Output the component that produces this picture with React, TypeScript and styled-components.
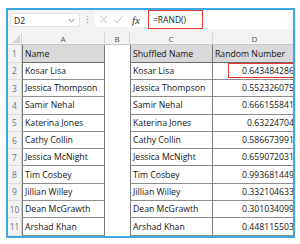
import React from "react";
import styled, { createGlobalStyle } from "styled-components";

const Global = createGlobalStyle`
  html, body { margin: 0; padding: 0; background: #ffffff; }
  body {
    width: 300px; height: 244px; overflow: hidden;
    font-family: "Open Sans", "Noto Sans", sans-serif;
  }
`;

const Frame = styled.div`
  margin: 8px 0 0 6px;
  width: 289px;
  box-sizing: border-box;
  border: 2px solid #3ea9e0;
  overflow: hidden;
  background: #ffffff;
  display: flex;
  flex-direction: column;
`;

const Toolbar = styled.div`
  height: 23px;
  flex: none;
  display: flex;
  align-items: flex-start;
  background: #f3f3f3;
  padding-left: 2px;
  box-sizing: border-box;
`;

const NameBox = styled.div`
  margin-top: 3px;
  width: 70px;
  height: 14px;
  box-sizing: border-box;
  background: #ffffff;
  border: 1px solid #e2e2e2;
  border-radius: 2px;
  display: flex;
  align-items: center;
  justify-content: space-between;
  padding: 0 4px 0 3px;
  font-size: 8.5px;
  color: #222;
`;

const Dots = styled.div`
  width: 15px;
  height: 18px;
  display: flex;
  align-items: center;
  justify-content: center;
`;

const IconBox = styled.div`
  margin-top: 2px;
  width: 53px;
  height: 15px;
  box-sizing: border-box;
  background: #ffffff;
  border-radius: 2px;
  display: flex;
  align-items: center;
  gap: 5px;
  padding-left: 4px;
`;

const Fx = styled.span`
  font-family: "Liberation Serif", "DejaVu Serif", serif;
  font-style: italic;
  font-size: 11px;
  color: #333;
  margin-left: 4px;
`;

const FormulaInput = styled.div`
  flex: 1;
  height: 19px;
  background: #ffffff;
  display: flex;
  align-items: stretch;
`;

const Highlight = styled.span`
  width: 55px;
  box-sizing: border-box;
  border: 1.5px solid #e53935;
  display: flex;
  align-items: center;
  padding-left: 4px;
  font-size: 8.5px;
  color: #222;
`;

const Sheet = styled.div`
  display: grid;
  width: 289px;
  grid-template-columns: 14px 83px 25px 83px 84px;
  grid-template-rows: 12.4px repeat(11, 17.3px);
`;

const Corner = styled.div`
  position: relative;
  background: #f2f2f2;
  border-right: 1px solid #d6d6d6;
  border-bottom: 1px solid #c8c8c8;
  box-sizing: border-box;
  &::after {
    content: "";
    position: absolute;
    right: 1px;
    bottom: 1px;
    width: 0;
    height: 0;
    border-left: 8px solid transparent;
    border-bottom: 8px solid #d4d4d4;
  }
`;

const ColHead = styled.div`
  background: #f2f2f2;
  border-right: 1px solid #d6d6d6;
  border-bottom: 1px solid #c8c8c8;
  box-sizing: border-box;
  display: flex;
  align-items: center;
  justify-content: center;
  font-size: 8px;
  color: #555;
`;

const RowHead = styled.div`
  background: #f2f2f2;
  border-right: 1px solid #d0d0d0;
  border-bottom: 1px solid #dedede;
  box-sizing: border-box;
  display: flex;
  align-items: center;
  justify-content: center;
  font-size: 8.5px;
  color: #777;
`;

const Cell = styled.div<{ $head?: boolean; $num?: boolean; $left?: boolean }>`
  position: relative;
  box-sizing: border-box;
  background: ${(p) => (p.$head ? "#d9d9d9" : "#ffffff")};
  border-bottom: 1px solid ${(p) => (p.$head ? "#6a6a6a" : "#8c8c8c")};
  border-right: 1px solid #7a7a7a;
  border-left: ${(p) => (p.$left ? "1px solid #7a7a7a" : "none")};
  display: flex;
  align-items: center;
  justify-content: ${(p) => (p.$num ? "flex-end" : "flex-start")};
  padding: 0 2px;
  font-size: 8.7px;
  color: #141414;
  white-space: nowrap;
  overflow: hidden;
`;

const Blank = styled.div`
  background: #ffffff;
`;

const SelectBox = styled.div`
  position: absolute;
  top: 0;
  bottom: 0.5px;
  left: 15px;
  width: 66px;
  box-sizing: border-box;
  border: 1.5px solid #e53935;
  pointer-events: none;
`;

const names = [
  "Kosar Lisa",
  "Jessica Thompson",
  "Samir Nehal",
  "Katerina Jones",
  "Cathy Collin",
  "Jessica McNight",
  "Tim Cosbey",
  "Jillian Willey",
  "Dean McGrawth",
  "Arshad Khan",
];

const randoms = [
  "0.643484286",
  "0.552326075",
  "0.666155841",
  "0.63224704",
  "0.586673991",
  "0.659072031",
  "0.993681449",
  "0.332104633",
  "0.301034099",
  "0.448115503",
];

const Chevron = () => (
  <svg width="7" height="5" viewBox="0 0 7 5">
    <path d="M0.8 1 L3.5 3.8 L6.2 1" fill="none" stroke="#777" strokeWidth="1" />
  </svg>
);

const VDots = () => (
  <svg width="3" height="9" viewBox="0 0 3 9">
    <circle cx="1.5" cy="1.5" r="0.8" fill="#aaa" />
    <circle cx="1.5" cy="4.5" r="0.8" fill="#aaa" />
    <circle cx="1.5" cy="7.5" r="0.8" fill="#aaa" />
  </svg>
);

const Cross = () => (
  <svg width="9" height="9" viewBox="0 0 9 9">
    <path d="M1 1 L8 8 M8 1 L1 8" stroke="#c4c4c4" strokeWidth="1" fill="none" />
  </svg>
);

const Check = () => (
  <svg width="10" height="9" viewBox="0 0 10 9">
    <path d="M1 5 L4 8 L9.5 1" stroke="#c4c4c4" strokeWidth="1" fill="none" />
  </svg>
);

export default function App() {
  return (
    <>
      <Global />
      <Frame>
        <Toolbar>
          <NameBox>
            <span>D2</span>
            <Chevron />
          </NameBox>
          <Dots>
            <VDots />
          </Dots>
          <IconBox>
            <Cross />
            <Check />
            <Fx>fx</Fx>
          </IconBox>
          <FormulaInput>
            <Highlight>=RAND()</Highlight>
          </FormulaInput>
        </Toolbar>
        <Sheet>
          <Corner />
          <ColHead>A</ColHead>
          <ColHead>B</ColHead>
          <ColHead>C</ColHead>
          <ColHead>D</ColHead>

          <RowHead>1</RowHead>
          <Cell $head $left>Name</Cell>
          <Blank />
          <Cell $head $left>Shuffled Name</Cell>
          <Cell $head>Random Number</Cell>

          {names.map((n, i) => (
            <React.Fragment key={n}>
              <RowHead>{i + 2}</RowHead>
              <Cell $left>{n}</Cell>
              <Blank />
              <Cell $left>{n}</Cell>
              <Cell $num>
                {randoms[i]}
                {i === 0 && <SelectBox />}
              </Cell>
            </React.Fragment>
          ))}
        </Sheet>
      </Frame>
    </>
  );
}
